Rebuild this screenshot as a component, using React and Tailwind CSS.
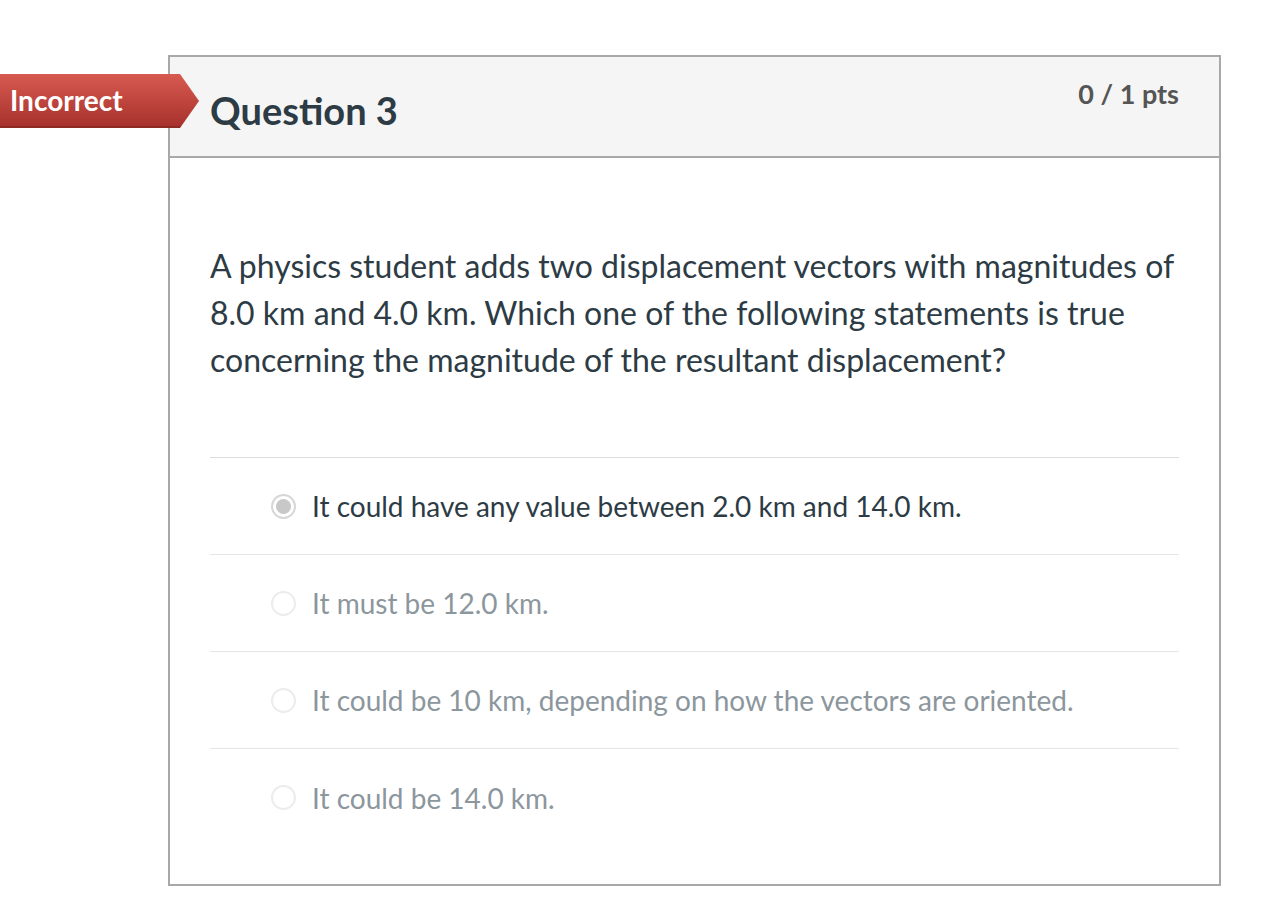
import React from "react";

const options = [
  { text: "It could have any value between 2.0 km and 14.0 km.", selected: true },
  { text: "It must be 12.0 km.", selected: false },
  { text: "It could be 10 km, depending on how the vectors are oriented.", selected: false },
  { text: "It could be 14.0 km.", selected: false },
];

function Radio({ selected }) {
  if (selected) {
    return (
      <span className="flex h-[25px] w-[25px] shrink-0 items-center justify-center rounded-full border-2 border-[#d6d6d6] bg-white">
        <span className="h-[15px] w-[15px] rounded-full bg-[#c8c8c8]" />
      </span>
    );
  }
  return <span className="h-[25px] w-[25px] shrink-0 rounded-full border-2 border-[#ececec] bg-white" />;
}

export default function App() {
  return (
    <div className="relative min-h-[908px] bg-white pt-[55px] font-['Lato','Open_Sans',sans-serif]">
      <div className="absolute left-0 top-[74px] flex h-[54px] w-[199px] items-center border-b-2 border-[#8e2a26] bg-gradient-to-b from-[#d85a50] to-[#a7322d] pl-[10px] text-[28px] font-bold text-white [clip-path:polygon(0_0,180px_0,199px_50%,180px_100%,0_100%)]">
        Incorrect
      </div>
      <div className="ml-[168px] w-[1053px] border-2 border-[#a8a8a8]">
        <div className="flex h-[101px] justify-between border-b-2 border-[#a8a8a8] bg-[#f5f5f5] pl-[40px] pr-[40px]">
          <h2 className="pt-[31px] text-[38px] font-bold leading-[44px] text-[#2d3b45]">Question 3</h2>
          <div className="pt-[21px] text-[27px] font-bold leading-[32px] text-[#555555]">0 / 1 pts</div>
        </div>
        <div className="px-[40px] pb-[38px] pt-[84px]">
          <p className="text-[32px] leading-[47px] text-[#2d3b45]">
            A physics student adds two displacement vectors with magnitudes of 8.0 km and 4.0 km. Which one of the following statements is true concerning the magnitude of the resultant displacement?
          </p>
          <div className="mt-[74px] border-t border-[#dddddd]">
            {options.map((o, i) => (
              <div
                key={i}
                className={`flex h-[97px] items-center gap-[16px] pl-[61px] ${i < options.length - 1 ? "border-b border-[#e6e6e6]" : ""}`}
              >
                <Radio selected={o.selected} />
                <span className={`text-[28px] ${o.selected ? "text-[#2d3b45]" : "text-[#8c969d]"}`}>{o.text}</span>
              </div>
            ))}
          </div>
        </div>
      </div>
    </div>
  );
}
